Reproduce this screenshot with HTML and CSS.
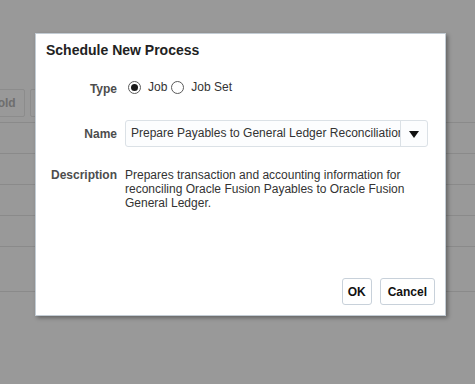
FILE: index.html
```html
<!DOCTYPE html>
<html>
<head>
<meta charset="utf-8">
<link rel="stylesheet" href="styles.css">
</head>
<body>
<div class="page">
  <div class="toolbar">
    <span class="bgbtn first">Hold</span>
    <span class="bgbtn">Cancel</span>
  </div>
  <div class="rows">
    <div class="row"></div>
    <div class="row"></div>
    <div class="row"></div>
    <div class="row"></div>
    <div class="row tall"></div>
  </div>
</div>

<div class="dialog">
  <div class="title">Schedule New Process</div>
  <div class="form">
    <div class="label type-label">Type</div>
    <div class="radios">
      <span class="radio checked"></span><span class="rlabel">Job</span>
      <span class="radio"></span><span class="rlabel">Job Set</span>
    </div>
    <div class="label name-label">Name</div>
    <div class="select">
      <div class="select-text">Prepare Payables to General Ledger Reconciliation Report</div>
      <div class="select-btn"><span class="arrow"></span></div>
    </div>
    <div class="label desc-label">Description</div>
    <div class="desc">Prepares transaction and accounting information for reconciling Oracle Fusion Payables to Oracle Fusion General Ledger.</div>
  </div>
  <div class="footer">
    <button class="btn ok">OK</button>
    <button class="btn">Cancel</button>
  </div>
</div>
</body>
</html>
```

FILE: styles.css
```css
html, body {
  margin: 0;
  padding: 0;
}
body {
  width: 475px;
  height: 384px;
  background: #999999;
  font-family: "Liberation Sans", Arial, sans-serif;
  overflow: hidden;
  position: relative;
}
.page {
  padding-top: 89px;
}
.toolbar {
  display: flex;
  gap: 5px;
  margin-left: -20px;
  height: 28px;
}
.bgbtn {
  display: flex;
  align-items: center;
  box-sizing: border-box;
  height: 28px;
  padding: 0 8px;
  border: 1px solid #8c8c8c;
  border-radius: 2px;
  font-size: 12px;
  font-weight: bold;
  color: #6e6e6e;
}
.rows {
  margin-top: 5px;
  border-top: 1px solid #8a8a8a;
}
.row {
  height: 30px;
  border-bottom: 1px solid #8a8a8a;
}
.row.tall {
  height: 44px;
}
.dialog {
  position: absolute;
  left: 35px;
  top: 33px;
  width: 409px;
  height: 281px;
  background: #ffffff;
  border: 1px solid #c3ccd4;
  box-shadow: 2px 2px 4px rgba(0,0,0,0.35);
  display: flex;
  flex-direction: column;
}
.title {
  font-size: 14px;
  font-weight: bold;
  color: #222;
  padding: 7px 0 0 10px;
  height: 23px;
  line-height: 18px;
}
.form {
  display: grid;
  grid-template-columns: 81px 303px;
  column-gap: 8px;
  align-items: center;
  margin-top: 14px;
}
.label {
  text-align: right;
  font-size: 12px;
  font-weight: bold;
  color: #4d4d4d;
}
.type-label {
  padding-top: 3px;
}
.radios {
  display: flex;
  align-items: center;
  height: 18px;
  font-size: 12px;
  color: #333;
}
.radio {
  box-sizing: border-box;
  width: 13px;
  height: 13px;
  border: 1px solid #5a5a5a;
  border-radius: 50%;
  display: inline-flex;
  align-items: center;
  justify-content: center;
  margin: 0 7px 0 3px;
}
.radio.checked::after {
  content: "";
  width: 7px;
  height: 7px;
  border-radius: 50%;
  background: #1a1a1a;
}
.rlabel {
  margin-right: 1px;
}
.name-label {
  margin-top: 24px;
}
.select {
  margin-top: 24px;
  display: flex;
  box-sizing: border-box;
  height: 27px;
  border: 1px solid #dbe1e6;
  border-radius: 3px;
  background: #fcfdfe;
}
.select-text {
  flex: 1;
  overflow: hidden;
  white-space: nowrap;
  font-size: 12px;
  color: #333;
  line-height: 25px;
  padding-left: 5px;
}
.select-btn {
  width: 26px;
  border-left: 1px solid #dbe1e6;
  display: flex;
  align-items: center;
  justify-content: center;
}
.arrow {
  width: 0;
  height: 0;
  border-left: 5px solid transparent;
  border-right: 5px solid transparent;
  border-top: 7px solid #111;
  margin-top: 1px;
}
.desc-label {
  align-self: start;
  margin-top: 21px;
  line-height: 14px;
}
.desc {
  align-self: start;
  margin-top: 21px;
  font-size: 12px;
  line-height: 14px;
  color: #333;
  padding-right: 6px;
}
.footer {
  margin-top: auto;
  display: flex;
  justify-content: flex-end;
  gap: 8px;
  padding: 0 10px 10px 0;
}
.btn {
  box-sizing: border-box;
  height: 27px;
  padding: 0 7px;
  background: #fff;
  border: 1px solid #c8d1da;
  border-radius: 3px;
  font-family: "Liberation Sans", Arial, sans-serif;
  font-size: 12px;
  font-weight: bold;
  color: #111;
}
.btn.ok {
  padding: 0 5px;
}
```
